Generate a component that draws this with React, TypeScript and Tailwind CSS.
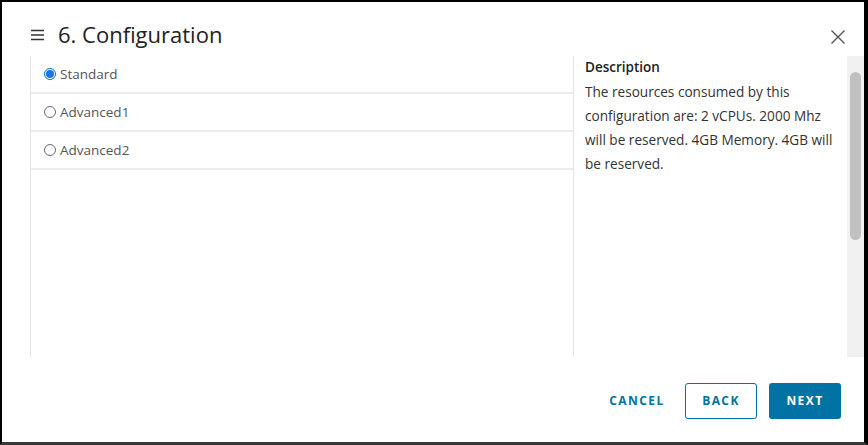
import * as React from "react"

const options = ["Standard", "Advanced1", "Advanced2"]

function Radio({ checked }: { checked: boolean }) {
    return checked ? (
        <span className="flex h-[12px] w-[12px] items-center justify-center rounded-full border border-[#0079b8] bg-white">
            <span className="h-[8px] w-[8px] rounded-full bg-[#1a73e8]" />
        </span>
    ) : (
        <span className="h-[12px] w-[12px] rounded-full border border-[#6a6a6a] bg-white" />
    )
}

export default function App() {
    const [selected, setSelected] = React.useState("Standard")

    return (
        <div className="h-[445px] w-[868px] border-t-2 border-r-4 border-b-[3px] border-l-2 border-t-black border-r-black border-b-[#3a3a3a] border-l-black bg-white font-['Open_Sans',sans-serif] text-[#4a4a4a]">
            <div className="flex h-full flex-col">
                {/* header */}
                <div className="flex h-[54px] items-center pl-[29px] pr-[18px] pt-[10px]">
                    <svg width="14" height="12" viewBox="0 0 14 12" className="mr-[13px] mt-[1px]">
                        <path d="M0 1.5h13M0 6h13M0 10.5h13" stroke="#333" strokeWidth="1.3" />
                    </svg>
                    <h1 className="text-[22px] leading-none text-[#222]">6. Configuration</h1>
                    <button className="ml-auto mt-[6px]">
                        <svg width="16" height="16" viewBox="0 0 16 16">
                            <path d="M1.5 1.5l13 13M14.5 1.5l-13 13" stroke="#555" strokeWidth="1.4" />
                        </svg>
                    </button>
                </div>

                {/* body */}
                <div className="ml-[28px] flex h-[301px]">
                    <div className="w-[544px] border-l border-r border-[#e4e4e4]">
                        {options.map((o) => (
                            <label
                                key={o}
                                onClick={() => setSelected(o)}
                                className="flex h-[38px] cursor-pointer items-center gap-[4px] border-b-2 border-[#ececec] pl-[13px] text-[13.5px] text-[#555]"
                            >
                                <Radio checked={selected === o} />
                                <span>{o}</span>
                            </label>
                        ))}
                    </div>
                    <div className="flex-1 pl-[11px] pr-[8px]">
                        <div className="text-[13.5px] font-semibold leading-[22px] text-[#222]">Description</div>
                        <p className="mt-[2px] text-[13.6px] leading-[24px] text-[#333]">
                            The resources consumed by this configuration are: 2 vCPUs. 2000 Mhz will be reserved. 4GB Memory. 4GB will be reserved.
                        </p>
                    </div>
                    <div className="flex w-[17px] justify-center bg-[#f1f1f1] pt-[16px]">
                        <div className="h-[168px] w-[11px] rounded-full bg-[#c1c1c1]" />
                    </div>
                </div>

                {/* footer */}
                <div className="flex flex-1 items-center justify-end gap-[12px] pr-[23px] pt-[3px]">
                    <button className="h-[36px] w-[72px] rounded-[3px] text-[12px] font-bold tracking-[0.12em] text-[#0072a3]">CANCEL</button>
                    <button className="h-[36px] w-[72px] rounded-[3px] border border-[#0072a3] text-[12px] font-bold tracking-[0.12em] text-[#0072a3]">BACK</button>
                    <button className="h-[36px] w-[72px] rounded-[3px] bg-[#0072a3] text-[12px] font-bold tracking-[0.12em] text-white">NEXT</button>
                </div>
            </div>
        </div>
    )
}
